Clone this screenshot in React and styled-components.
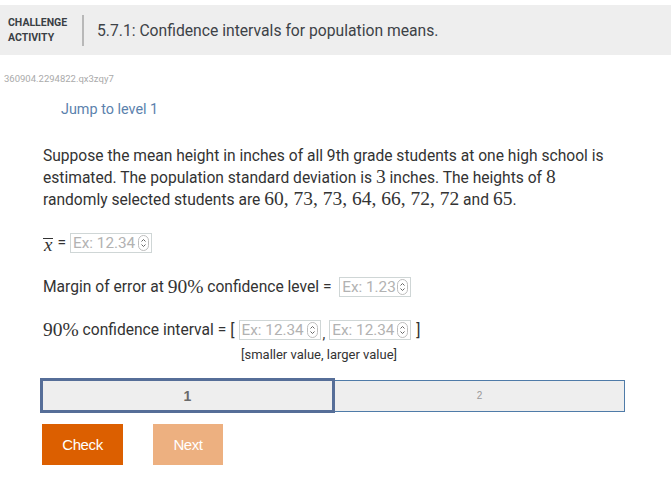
import styled, { createGlobalStyle } from "styled-components";

const GlobalStyle = createGlobalStyle`
  body {
    margin: 0;
    background: #fff;
    font-family: Roboto, "Noto Sans", Arial, sans-serif;
    color: #333;
  }
`;

const Page = styled.div`
  width: 671px;
  height: 487px;
  overflow: hidden;
  padding-top: 5px;
  box-sizing: border-box;
`;

const Header = styled.div`
  height: 50px;
  background: #eeeeee;
  display: flex;
  align-items: center;
`;

const Label = styled.div`
  padding-left: 8px;
  width: 63px;
  font-size: 10.5px;
  font-weight: 700;
  line-height: 15px;
  color: #3a3f45;
`;

const Divider = styled.div`
  width: 2px;
  height: 31px;
  background: #b8b8b8;
  margin-left: 11px;
`;

const Title = styled.div`
  margin-left: 13px;
  font-size: 15.7px;
  color: #3d4247;
  padding-top: 1px;
`;

const Code = styled.div`
  margin-top: 18px;
  padding-left: 4px;
  font-size: 9.5px;
  color: #aaaaaa;
`;

const JumpLink = styled.a`
  display: block;
  margin: 17px 0 0 61px;
  font-size: 14.4px;
  color: #5b82ad;
  text-decoration: none;
`;

const Content = styled.div`
  padding: 0 0 0 43px;
`;

const Prompt = styled.p`
  margin: 28px 0 0;
  width: 566px;
  font-size: 15.6px;
  line-height: 21px;
`;

const M = styled.span`
  font-family: "Liberation Serif", "DejaVu Serif", serif;
  font-size: 19.5px;
  line-height: 1;
`;

const Row = styled.div`
  display: flex;
  align-items: center;
  margin-top: ${(p) => p.$top}px;
  font-size: 15.6px;
  height: 22px;
`;

const Eq = styled.span`
  margin: 0 4px;
`;

const Bracket = styled.span`
  font-size: 16px;
  margin: ${(p) => p.$m};
`;

const Field = styled.label`
  display: inline-flex;
  align-items: center;
  box-sizing: border-box;
  width: ${(p) => p.$w}px;
  height: 20px;
  border: 1px solid #cfd6d6;
  padding: 0 2px 0 2px;
`;

const Input = styled.input`
  border: none;
  outline: none;
  flex: 1;
  min-width: 0;
  padding: 0;
  font-family: Roboto, sans-serif;
  font-size: 15.3px;
  color: #333;
  background: transparent;
  &::placeholder {
    color: #b2b2b2;
  }
`;

const Comma = styled.span`
  margin: 0 4px 0 2px;
  align-self: flex-end;
  font-size: 14px;
  line-height: 14px;
`;

const Caption = styled.div`
  margin: 6px 0 0 198px;
  font-size: 13px;
  color: #333;
`;

const Levels = styled.div`
  display: flex;
  align-items: center;
  width: 585px;
  margin: 16px 0 0 -3px;
`;

const Level = styled.div`
  flex: 1;
  box-sizing: border-box;
  display: flex;
  align-items: center;
  justify-content: center;
  background: #eeeeee;
  height: ${(p) => (p.$active ? 35 : 32)}px;
  border: ${(p) => (p.$active ? "3px solid #566e98" : "1px solid #4f7ba8")};
  border-left-width: ${(p) => (p.$active ? 3 : 0)}px;
  color: ${(p) => (p.$active ? "#6a6a6a" : "#999")};
  font-size: ${(p) => (p.$active ? 14 : 10)}px;
  font-weight: ${(p) => (p.$active ? 700 : 400)};
  font-family: "Liberation Sans", Arial, sans-serif;
`;

const Buttons = styled.div`
  display: flex;
  gap: 30px;
  margin: 11px 0 0 -1px;
`;

const Button = styled.button`
  border: none;
  height: 41px;
  padding: 0;
  width: ${(p) => p.$w}px;
  background: ${(p) => (p.$disabled ? "#edb080" : "#dc5f00")};
  color: #fff;
  font-family: "Liberation Sans", Arial, sans-serif;
  font-size: 15px;
  letter-spacing: -0.4px;
  cursor: ${(p) => (p.$disabled ? "default" : "pointer")};
`;

const Spinner = () => (
  <svg width="11" height="16" viewBox="0 0 11 16">
    <rect x="0.5" y="0.5" width="10" height="15" rx="5" fill="#fff" stroke="#bdbdbd" />
    <path d="M3.5 6.5 L5.5 4.5 L7.5 6.5" fill="none" stroke="#666" strokeWidth="1" />
    <path d="M3.5 9.5 L5.5 11.5 L7.5 9.5" fill="none" stroke="#666" strokeWidth="1" />
  </svg>
);

const NumField = ({ w, placeholder }) => (
  <Field $w={w}>
    <Input type="text" placeholder={placeholder} />
    <Spinner />
  </Field>
);

const XBar = styled.span`
  display: inline-block;
  font-family: "Liberation Serif", "DejaVu Serif", serif;
  font-style: italic;
  font-size: 19px;
  line-height: 11px;
  padding: 0 1px;
  border-top: 1px solid #333;
  margin-top: 2px;
`;

export default function App() {
  return (
    <Page>
      <GlobalStyle />
      <Header>
        <Label>
          CHALLENGE
          <br />
          ACTIVITY
        </Label>
        <Divider />
        <Title>5.7.1: Confidence intervals for population means.</Title>
      </Header>
      <Code>360904.2294822.qx3zqy7</Code>
      <JumpLink href="#">Jump to level 1</JumpLink>
      <Content>
        <Prompt>
          Suppose the mean height in inches of all 9th grade students at one high school is
          estimated. The population standard deviation is <M>3</M> inches. The heights of <M>8</M>{" "}
          randomly selected students are <M>60, 73, 73, 64, 66, 72, 72</M> and <M>65</M>.
        </Prompt>
        <Row $top={21}>
          <XBar>x</XBar>
          <Eq>=</Eq>
          <NumField w={82} placeholder="Ex: 12.34" />
        </Row>
        <Row $top={22}>
          Margin of error at&nbsp;<M>90%</M>&nbsp;confidence level =&nbsp;&nbsp;
          <NumField w={72} placeholder="Ex: 1.23" />
        </Row>
        <Row $top={21}>
          <M>90%</M>&nbsp;confidence interval =
          <Bracket $m="0 4px 0 4px">[</Bracket>
          <NumField w={82} placeholder="Ex: 12.34" />
          <Comma>,</Comma>
          <NumField w={82} placeholder="Ex: 12.34" />
          <Bracket $m="0 0 0 5px">]</Bracket>
        </Row>
        <Caption>[smaller value, larger value]</Caption>
        <Levels>
          <Level $active>1</Level>
          <Level>2</Level>
        </Levels>
        <Buttons>
          <Button $w={81}>Check</Button>
          <Button $w={70} $disabled>
            Next
          </Button>
        </Buttons>
      </Content>
    </Page>
  );
}
